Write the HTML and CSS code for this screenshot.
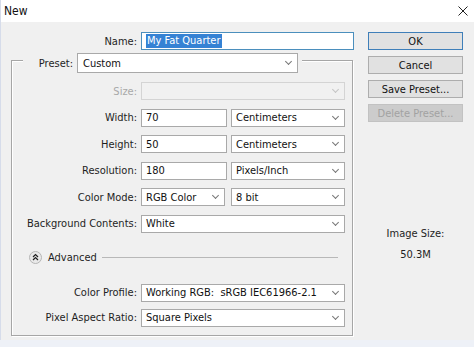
FILE: index.html
```html
<!DOCTYPE html>
<html lang="en">
<head>
<title>New</title>
<meta charset="utf-8">
<meta name="viewport" content="width=device-width, initial-scale=1">
<link rel="stylesheet" href="styles.css">
</head>
<body>

<div class="window">
  <div class="titlebar">
    <span class="title">New</span>
    <svg class="close" width="10" height="10" viewBox="0 0 10 10"><path d="M0.5 0.5L9.5 9.5M9.5 0.5L0.5 9.5"/></svg>
  </div>

  <div class="dialog">
    <div class="main">
      <div class="row">
        <label class="lbl">Name:</label>
        <div class="field name-field"><span class="selected">My Fat Quarter</span></div>
      </div>

      <div class="group">
        <div class="group-head">
          <label class="lbl-preset">Preset:</label>
          <div class="field select preset">Custom</div>
        </div>

        <div class="row first">
          <label class="lbl off">Size:</label>
          <div class="field select wide disabled"></div>
        </div>
        <div class="row">
          <label class="lbl">Width:</label>
          <div class="field num">70</div>
          <div class="field select unit">Centimeters</div>
        </div>
        <div class="row">
          <label class="lbl">Height:</label>
          <div class="field num">50</div>
          <div class="field select unit">Centimeters</div>
        </div>
        <div class="row">
          <label class="lbl">Resolution:</label>
          <div class="field num">180</div>
          <div class="field select unit">Pixels/Inch</div>
        </div>
        <div class="row">
          <label class="lbl">Color Mode:</label>
          <div class="field select mode">RGB Color</div>
          <div class="field select unit">8 bit</div>
        </div>
        <div class="row">
          <label class="lbl">Background Contents:</label>
          <div class="field select wide">White</div>
        </div>

        <div class="advanced">
          <svg class="adv-icon" width="13" height="13" viewBox="0 0 13 13">
            <circle cx="6.5" cy="6.5" r="6" fill="#e9e9e9" stroke="#b5b5b5"/>
            <path d="M4 6l2.5-2.5L9 6M4 9l2.5-2.5L9 9" fill="none" stroke="#222" stroke-width="1.2"/>
          </svg>
          <span>Advanced</span>
          <div class="adv-line"></div>
        </div>

        <div class="row profile">
          <label class="lbl">Color Profile:</label>
          <div class="field select wide">Working RGB:&nbsp; sRGB IEC61966-2.1</div>
        </div>
        <div class="row tight">
          <label class="lbl">Pixel Aspect Ratio:</label>
          <div class="field select wide">Square Pixels</div>
        </div>
      </div>
    </div>

    <div class="side">
      <button class="btn default">OK</button>
      <button class="btn">Cancel</button>
      <button class="btn">Save Preset...</button>
      <button class="btn" disabled>Delete Preset...</button>

      <div class="image-size">Image Size:</div>
      <div class="image-size-value">50.3M</div>
    </div>
  </div>
</div>

</body>
</html>
```

FILE: styles.css
```css
* {
  box-sizing: border-box;
}

body {
  margin: 0;
  background-color: #eef1f7;
  font-family: "DejaVu Sans Condensed", "DejaVu Sans", sans-serif;
  font-size: 11px;
  color: #1e1e1e;
}

.window {
  width: 474px;
  border-left: 1px solid #d6dcea;
}

/* Title bar */
.titlebar {
  height: 22px;
  background-color: #fff;
  display: flex;
  align-items: center;
  justify-content: space-between;
  padding: 0 6px 0 3px;
}

.title {
  font-size: 12px;
  color: #111;
}

.close path {
  stroke: #222;
  stroke-width: 1;
}

/* Dialog body */
.dialog {
  height: 318px;
  background-color: #f0f0f0;
  display: flex;
  gap: 14px;
  padding: 10px 0 0 10px;
}

.main {
  width: 343px;
}

.row {
  display: flex;
  align-items: center;
  height: 18px;
  margin-top: 8.6px;
}

.main > .row {
  margin-top: 0;
}

.lbl {
  width: 126px;
  margin-right: 4px;
  text-align: right;
  white-space: nowrap;
}

.group .lbl {
  width: 125px;
}

.lbl.off {
  color: #a8a8a8;
}

.field {
  height: 18px;
  background-color: #fff;
  border: 1px solid #a9a9a9;
  padding: 0 4px;
  display: flex;
  align-items: center;
  color: #111;
  white-space: nowrap;
}

.name-field {
  width: 213px;
  border-color: #4b8fbd;
}

.selected {
  background-color: #3582d4;
  color: #fff;
  padding: 0 1px;
  line-height: 14px;
}

.select {
  position: relative;
}

.select::after {
  content: "";
  position: absolute;
  right: 6px;
  top: 4px;
  width: 4px;
  height: 4px;
  border-right: 1px solid #777;
  border-bottom: 1px solid #777;
  transform: rotate(45deg);
}

.select.disabled {
  background-color: #f1f1f1;
  border-color: #d4d4d4;
}

.select.disabled::after {
  border-color: #c4c4c4;
}

.wide { width: 204px; }
.num { width: 86px; margin-right: 4px; }
.unit { width: 114px; }
.mode { width: 84px; margin-right: 6px; }

/* Group box */
.group {
  width: 342px;
  margin-top: 10px;
  border: 1px solid #a6a6a6;
  box-shadow: inset 1px 1px 0 #fff, 1px 1px 0 #fff;
  padding-bottom: 8px;
}

.group-head {
  display: flex;
  align-items: center;
  width: fit-content;
  margin: -8px 0 0 11px;
  padding-right: 4px;
  background-color: #f0f0f0;
}

.lbl-preset {
  width: 50px;
  margin-right: 4px;
  text-align: right;
}

.preset {
  width: 221px;
  height: 20px;
  padding-left: 5px;
}

.preset::after {
  top: 5px;
}

.row.first {
  margin-top: 9px;
}

.advanced {
  display: flex;
  align-items: center;
  height: 14px;
  margin: 18px 14px 0 17px;
}

.adv-icon {
  margin-right: 6px;
}

.adv-line {
  flex: 1;
  height: 1px;
  margin-left: 5px;
  background-color: #b8b8b8;
}

.row.profile {
  margin-top: 19px;
}

.row.tight {
  margin-top: 7px;
}

/* Buttons column */
.side {
  width: 95px;
  display: flex;
  flex-direction: column;
  align-items: stretch;
}

.btn {
  height: 18px;
  margin: 0 0 6px 0;
  padding: 0;
  font-family: inherit;
  font-size: 11px;
  color: #111;
  background-color: #e1e1e1;
  border: 1px solid #adadad;
}

.btn.default {
  border-color: #3f7fb9;
}

.btn:disabled {
  color: #a2a2a2;
  background-color: #cccccc;
  border-color: #c2c2c2;
}

.image-size {
  margin-top: 99px;
  text-align: center;
  line-height: 13px;
}

.image-size-value {
  margin-top: 8px;
  text-align: center;
  line-height: 13px;
}
```
